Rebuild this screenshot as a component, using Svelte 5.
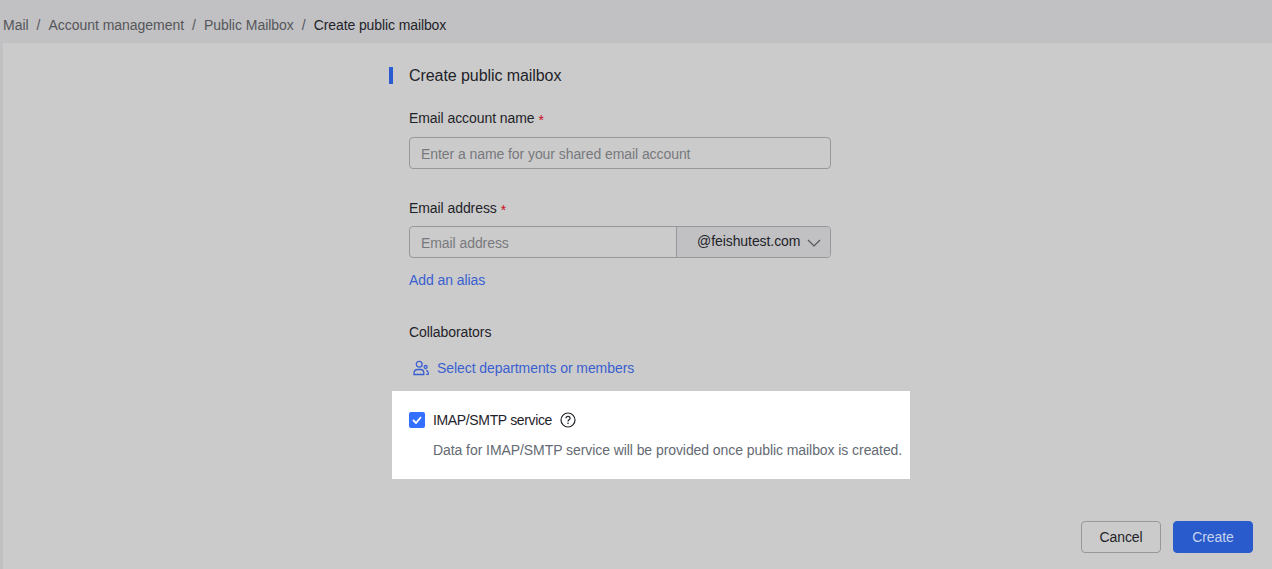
<script>
  const crumbs = ['Mail', 'Account management', 'Public Mailbox'];
</script>

<div class="page">
  <nav class="crumbs">
    {#each crumbs as c}
      <span class="crumb">{c}</span><span class="sep">/</span>
    {/each}
    <span class="current">Create public mailbox</span>
  </nav>
  <main class="main">
    <div class="form">
      <h1 class="title">Create public mailbox</h1>

      <label class="label first">Email account name <span class="req">*</span></label>
      <div class="input wide"><span class="ph">Enter a name for your shared email account</span></div>

      <label class="label second">Email address <span class="req">*</span></label>
      <div class="input group">
        <span class="ph grow">Email address</span>
        <div class="domain">
          <span>@feishutest.com</span>
          <svg class="chev" width="14" height="8" viewBox="0 0 14 8" fill="none"><path d="M1 1l6 6 6-6" stroke="#55565a" stroke-width="1.2"/></svg>
        </div>
      </div>
      <div class="link alias">Add an alias</div>

      <div class="label third">Collaborators</div>
      <div class="link members">
        <svg width="16" height="16" viewBox="0 0 16 16" fill="none" stroke="#3a5fd0" stroke-width="1.3">
          <circle cx="6.2" cy="4.2" r="2.9"/>
          <path d="M1 14.5v-1.2c0-2.3 1.8-3.8 4-3.8h2.4c2.2 0 3.4 1.5 3.4 3.8v1.2z"/>
          <circle cx="12.6" cy="7" r="1.5"/>
          <path d="M13.2 10.4c1.2.3 2 1.2 2 2.5v1.4h-2"/>
        </svg>
        <span>Select departments or members</span>
      </div>

      <section class="spot">
        <div class="row">
          <span class="check">
            <svg width="10" height="8" viewBox="0 0 10 8" fill="none"><path d="M1 4l3 3 5-6" stroke="#fff" stroke-width="1.8"/></svg>
          </span>
          <span class="name">IMAP/SMTP service</span>
          <svg class="help" width="16" height="16" viewBox="0 0 16 16" fill="none">
            <circle cx="8" cy="8" r="7" stroke="#1f2329" stroke-width="1.2"/>
            <path d="M5.9 6.3c0-1.2.9-2 2.1-2s2.1.8 2.1 1.9c0 1.5-2.1 1.6-2.1 3.2" stroke="#1f2329" stroke-width="1.2"/>
            <circle cx="8" cy="11.3" r=".8" fill="#1f2329"/>
          </svg>
        </div>
        <p class="hint">Data for IMAP/SMTP service will be provided once public mailbox is created.</p>
      </section>
    </div>
    <footer class="actions">
      <button class="btn">Cancel</button>
      <button class="btn primary">Create</button>
    </footer>
  </main>
</div>

<style>
  :global(body) {
    margin: 0;
    background: #c1c1c3;
  }
  .page {
    width: 1272px;
    height: 569px;
    display: flex;
    flex-direction: column;
    overflow: hidden;
    background: #c1c1c3;
    font-family: "Liberation Sans", sans-serif;
    font-size: 14px;
    letter-spacing: -0.07px;
    color: #1f2329;
  }
  .crumbs {
    height: 43px;
    flex: none;
    display: flex;
    align-items: center;
    padding: 7px 0 0 3px;
    box-sizing: border-box;
    color: #55565a;
    white-space: nowrap;
    letter-spacing: -0.03px;
  }
  .sep { margin: 0 8px; }
  .current { color: #1f2329; letter-spacing: -0.1px; }
  .main {
    flex: 1;
    margin-left: 3px;
    background: #cbcbcb;
    display: flex;
    flex-direction: column;
    min-height: 0;
  }
  .form {
    flex: 1;
    display: flex;
    flex-direction: column;
    margin-left: 406px;
    width: 422px;
  }
  .title {
    margin: 24px 0 0 -20px;
    padding-left: 16px;
    border-left: 4px solid #2b5bd0;
    font-size: 16px;
    font-weight: 400;
    line-height: 17px;
    height: 17px;
  }
  .label {
    display: block;
    height: 20px;
    line-height: 20px;
    color: #1f2329;
  }
  .first { margin-top: 24px; }
  .second { margin-top: 29px; }
  .third { margin-top: 32px; }
  .req {
    color: #c8101c;
    font-size: 14px;
    line-height: 1;
    vertical-align: -2px;
  }
  .input {
    margin-top: 9px;
    height: 32px;
    border: 1px solid #97989b;
    border-radius: 4px;
    box-sizing: border-box;
    display: flex;
    align-items: center;
    color: #78797d;
  }
  .ph { padding: 2px 0 0 11px; }
  .group { margin-top: 8px; overflow: hidden; }
  .grow { flex: 1; }
  .domain {
    width: 154px;
    height: 100%;
    box-sizing: border-box;
    display: flex;
    align-items: center;
    gap: 7px;
    padding: 0 0 2px 20px;
    background: #c1c1c3;
    border-left: 1px solid #97989b;
    color: #1f2329;
    white-space: nowrap;
  }
  .chev { margin-top: 3px; }
  .link { color: #3a5fd0; line-height: 20px; }
  .alias { margin-top: 12px; }
  .members {
    margin-top: 16px;
    display: flex;
    align-items: center;
    gap: 8px;
    padding-left: 4px;
  }
  .spot {
    margin: 13px 0 0 -17px;
    width: 518px;
    height: 88px;
    box-sizing: border-box;
    background: #fff;
    padding: 19px 0 0 17px;
  }
  .row { display: flex; align-items: center; height: 20px; }
  .check {
    width: 16px;
    height: 16px;
    border-radius: 2px;
    background: #3370ff;
    display: flex;
    align-items: center;
    justify-content: center;
  }
  .name { margin-left: 8px; letter-spacing: -0.35px; }
  .help { margin-left: 8px; }
  .hint {
    margin: 10px 0 0 24px;
    color: #646a73;
    line-height: 20px;
    white-space: nowrap;
  }
  .actions {
    display: flex;
    justify-content: flex-end;
    gap: 12px;
    padding: 0 19px 16px 0;
  }
  .btn {
    width: 80px;
    height: 32px;
    border: 1px solid #97989b;
    border-radius: 4px;
    background: transparent;
    font: inherit;
    letter-spacing: inherit;
    color: #1f2329;
    padding: 0;
  }
  .primary {
    background: #295bcc;
    border-color: #295bcc;
    color: #c6d3ee;
  }
</style>
